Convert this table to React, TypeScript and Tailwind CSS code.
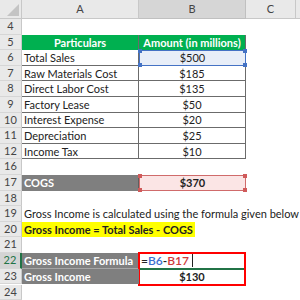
import type { ReactNode } from "react";

const font = "font-['Lato','Liberation_Sans',sans-serif]";

// rows 6-12 of the table
const items = [
  { n: 6, label: "Total Sales", amount: "$500" },
  { n: 7, label: "Raw Materials Cost", amount: "$185" },
  { n: 8, label: "Direct Labor Cost", amount: "$135" },
  { n: 9, label: "Factory Lease", amount: "$50" },
  { n: 10, label: "Interest Expense", amount: "$20" },
  { n: 11, label: "Depreciation", amount: "$25" },
  { n: 12, label: "Income Tax", amount: "$10" },
];

const RowHead = ({ n, active }: { n: number; active?: boolean }) => (
  <div
    className={`h-[15.6px] flex items-center justify-center border-b border-[#d6d6d6] text-[11px] ${
      active
        ? "bg-[#d4d4d4] text-[#217346] border-r-2 border-r-[#217346]"
        : "bg-[#e9e9e9] text-[#444] border-r border-r-[#c8c8c8]"
    }`}
  >
    {n}
  </div>
);

const Handle = ({ pos, color }: { pos: string; color: string }) => (
  <span className={`absolute w-[4px] h-[4px] ${pos} ${color}`} />
);

const Blank = () => <div className="h-[15.6px]" />;

const EmptyRow = ({ n }: { n: number }) => (
  <>
    <RowHead n={n} />
    <Blank />
    <Blank />
    <Blank />
    <Blank />
  </>
);

const Cell = ({ children, className = "" }: { children?: ReactNode; className?: string }) => (
  <div className={`h-[15.6px] flex items-center text-[11px] leading-none whitespace-nowrap ${className}`}>{children}</div>
);

export default function App() {
  return (
    <div className={`w-[300px] h-[300px] overflow-hidden bg-white text-[#222] ${font}`}>
      <div className="grid grid-cols-[22px_117px_107px_50px_1fr]">
        {/* column headers */}
        <div className="h-[19px] bg-[#e9e9e9] border-r border-b border-[#c8c8c8] relative">
          <span className="absolute right-[2px] bottom-[2px] w-0 h-0 border-l-[12px] border-l-transparent border-b-[12px] border-b-[#c4c4c4]" />
        </div>
        <div className="h-[19px] bg-[#e9e9e9] border-r border-b border-[#c8c8c8] flex items-center justify-center text-[11px] text-[#444]">
          A
        </div>
        <div className="h-[19px] bg-[#d6d6d6] border-r border-b border-[#c0c0c0] flex items-center justify-center text-[11px] text-[#444]">
          B
        </div>
        <div className="h-[19px] bg-[#e9e9e9] border-r border-b border-[#c8c8c8] flex items-center justify-center text-[11px] text-[#444]">
          C
        </div>
        <div className="h-[19px] bg-[#e9e9e9] border-b border-[#c8c8c8]" />

        <EmptyRow n={4} />

        {/* table header */}
        <RowHead n={5} />
        <Cell className="bg-[#00b050] text-white font-bold justify-center border-r border-[#6b6b6b]">Particulars</Cell>
        <Cell className="bg-[#00b050] text-white font-bold justify-center border-r border-[#6b6b6b]">Amount (in millions)</Cell>
        <Blank />
        <Blank />

        {items.map((it) => (
          <div key={it.n} className="contents">
            <RowHead n={it.n} />
            <Cell className="pl-[2px] border-r border-b border-[#6b6b6b]">{it.label}</Cell>
            {it.n === 6 ? (
              <div className="relative h-[15.6px] flex items-center justify-center text-[11px] leading-none bg-[#e8eef8] border border-[#4472c4]">
                {it.amount}
                <Handle pos="-left-[2px] -top-[2px]" color="bg-[#4472c4]" />
                <Handle pos="-left-[2px] -bottom-[2px]" color="bg-[#4472c4]" />
                <Handle pos="-right-[2px] -top-[2px]" color="bg-[#4472c4]" />
                <Handle pos="-right-[2px] -bottom-[2px]" color="bg-[#4472c4]" />
              </div>
            ) : (
              <Cell className="justify-center border-r border-b border-[#6b6b6b]">{it.amount}</Cell>
            )}
            <Blank />
            <Blank />
          </div>
        ))}

        <EmptyRow n={16} />

        {/* COGS */}
        <RowHead n={17} />
        <Cell className="bg-[#7f7f7f] text-white font-bold pl-[2px] border-r border-[#5f5f5f]">COGS</Cell>
        <div className="relative h-[15.6px] flex items-center justify-center text-[11px] leading-none font-bold bg-[#fbe5e5] border border-[#d06b6b]">
          $370
          <Handle pos="-left-[2px] -top-[2px]" color="bg-[#d05a5a]" />
          <Handle pos="-left-[2px] -bottom-[2px]" color="bg-[#d05a5a]" />
          <Handle pos="-right-[2px] -top-[2px]" color="bg-[#d05a5a]" />
          <Handle pos="-right-[2px] -bottom-[2px]" color="bg-[#d05a5a]" />
        </div>
        <Blank />
        <Blank />

        <EmptyRow n={18} />

        <RowHead n={19} />
        <Cell className="col-span-4 pl-[2px]">Gross Income is calculated using the formula given below</Cell>

        <RowHead n={20} />
        <div className="col-span-4 h-[15.6px] flex items-center">
          <div className="w-[173px] h-full flex items-center bg-[#ffff00] pl-[2px] text-[11px] leading-none font-bold whitespace-nowrap">
            Gross Income = Total Sales - COGS
          </div>
        </div>

        <EmptyRow n={21} />

        {/* result block */}
        <RowHead n={22} active />
        <Cell className="bg-[#7f7f7f] text-white font-bold pl-[2px] border-b border-[#a6a6a6]">Gross Income Formula</Cell>
        <div className="row-span-2 border-2 border-[#ff0000] -my-[1px] -ml-[1px] flex flex-col justify-center">
          <div className="h-[15.6px] flex items-center pl-[1px] text-[12px] leading-none font-semibold border-b-2 border-[#217346]">
            <span>=</span>
            <span className="text-[#3a6fd0]">B6</span>
            <span>-</span>
            <span className="text-[#d03a3a]">B17</span>
            <span className="ml-[3px] w-px h-[13px] bg-[#222]" />
          </div>
          <div className="h-[14px] flex items-center justify-center text-[11px] leading-none font-bold">$130</div>
        </div>
        <Blank />
        <Blank />

        <RowHead n={23} />
        <Cell className="bg-[#7f7f7f] text-white font-bold pl-[2px]">Gross Income</Cell>
        <Blank />
        <Blank />

        <EmptyRow n={24} />
      </div>
    </div>
  );
}
